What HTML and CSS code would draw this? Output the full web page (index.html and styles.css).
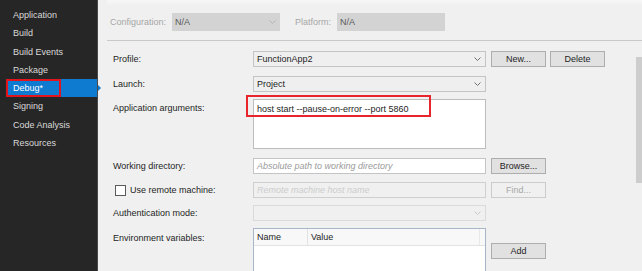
FILE: index.html
```html
<!DOCTYPE html>
<html>
<head>
<meta charset="utf-8">
<link rel="stylesheet" href="styles.css">
</head>
<body>
<div class="app">
  <nav class="sidebar">
    <div class="nav-item">Application</div>
    <div class="nav-item">Build</div>
    <div class="nav-item">Build Events</div>
    <div class="nav-item">Package</div>
    <div class="nav-item selected"><span class="mark">Debug*</span><span class="pointer"></span></div>
    <div class="nav-item">Signing</div>
    <div class="nav-item">Code Analysis</div>
    <div class="nav-item">Resources</div>
  </nav>
  <main class="main">
    <header class="topbar">
      <span class="top-label">Configuration:</span>
      <div class="top-combo"><span>N/A</span><svg class="chev" width="7" height="4" viewBox="0 0 7 4"><polyline points="0.5,0.5 3.5,3.5 6.5,0.5" fill="none" stroke="#b4b4b4" stroke-width="1"/></svg></div>
      <span class="top-label platform">Platform:</span>
      <div class="top-combo"><span>N/A</span></div>
    </header>
    <div class="content">
      <div class="form">
        <div class="row r-profile">
          <div class="label">Profile:</div>
          <div class="combo"><span>FunctionApp2</span><svg class="chev" width="7" height="4" viewBox="0 0 7 4"><polyline points="0.5,0.5 3.5,3.5 6.5,0.5" fill="none" stroke="#707070" stroke-width="1"/></svg></div>
          <div class="btn">New...</div>
          <div class="btn">Delete</div>
        </div>
        <div class="row r-launch">
          <div class="label">Launch:</div>
          <div class="combo"><span>Project</span><svg class="chev" width="7" height="4" viewBox="0 0 7 4"><polyline points="0.5,0.5 3.5,3.5 6.5,0.5" fill="none" stroke="#707070" stroke-width="1"/></svg></div>
        </div>
        <div class="row r-args">
          <div class="label label-top">Application arguments:</div>
          <div class="textarea">host start --pause-on-error --port 5860</div>
          <div class="annot"></div>
        </div>
        <div class="row r-wd">
          <div class="label">Working directory:</div>
          <div class="input"><span class="ph">Absolute path to working directory</span></div>
          <div class="btn">Browse...</div>
        </div>
        <div class="row r-remote">
          <div class="label"><span class="checkbox"></span>Use remote machine:</div>
          <div class="input disabled"><span class="ph light">Remote machine host name</span></div>
          <div class="btn disabled">Find...</div>
        </div>
        <div class="row r-auth">
          <div class="label">Authentication mode:</div>
          <div class="combo disabled"><span></span><svg class="chev" width="7" height="4" viewBox="0 0 7 4"><polyline points="0.5,0.5 3.5,3.5 6.5,0.5" fill="none" stroke="#c8c8c8" stroke-width="1"/></svg></div>
        </div>
        <div class="row r-env">
          <div class="label">Environment variables:</div>
          <div class="grid">
            <div class="grid-head">
              <div class="col-name">Name</div>
              <div class="col-value">Value</div>
              <div class="col-rest"></div>
            </div>
            <div class="grid-body"></div>
          </div>
          <div class="btn btn-add">Add</div>
        </div>
      </div>
      <div class="scrollbar">
        <div class="thumb"></div>
      </div>
    </div>
  </main>
</div>
</body>
</html>
```

FILE: styles.css
```css
* { box-sizing: border-box; }
html, body {
  margin: 0;
  padding: 0;
  width: 642px;
  height: 271px;
  overflow: hidden;
}
body {
  font-family: "Liberation Sans", Arial, sans-serif;
  font-size: 9px;
  color: #1e1e1e;
  background: #f0f0f0;
}
.app {
  display: flex;
  height: 271px;
}
.sidebar {
  width: 98px;
  flex: none;
  background: #262626;
  border-right: 1px solid #4a4a4a;
  padding-top: 6px;
}
.nav-item {
  height: 18.3px;
  line-height: 18.3px;
  padding-left: 13px;
  color: #dadada;
  white-space: nowrap;
}
.nav-item.selected {
  position: relative;
  background: #0e7ad0;
  margin-left: 6px;
  padding-left: 0;
  color: #ffffff;
}
.mark {
  display: inline-block;
  height: 18.3px;
  width: 55px;
  border: 2px solid #e2141e;
  padding-left: 5px;
  line-height: 14.3px;
  vertical-align: top;
}
.pointer {
  position: absolute;
  right: -4px;
  top: 6px;
  width: 0;
  height: 0;
  border-top: 3px solid transparent;
  border-bottom: 3px solid transparent;
  border-left: 3px solid #0e7ad0;
}
.main {
  flex: 1;
  min-width: 0;
  display: flex;
  flex-direction: column;
  background: #f0f0f0;
  overflow: hidden;
}
.topbar {
  flex: none;
  height: 41px;
  margin-left: 9px;
  padding: 13px 0 0 3px;
  border-bottom: 1px solid #c9c9c9;
  display: flex;
  align-items: flex-start;
  background: linear-gradient(#f7f7f7, #f0f0f0 6px);
}
.top-label {
  color: #a6a6a6;
  line-height: 18px;
  width: 62px;
}
.top-label.platform {
  width: 42px;
  margin-left: 15px;
}
.top-combo {
  width: 108px;
  height: 18px;
  background: #d3d3d3;
  color: #5a5a5a;
  display: flex;
  align-items: center;
  justify-content: space-between;
  padding: 0 4px 0 3px;
}
.content {
  flex: 1;
  min-height: 0;
  display: flex;
}
.form {
  flex: 1;
  padding: 10px 0 0 15px;
  display: flex;
  flex-direction: column;
}
.row {
  flex: none;
  display: flex;
  align-items: center;
  position: relative;
}
.r-launch { margin-top: 9px; }
.r-args { margin-top: 7px; align-items: flex-start; }
.r-wd { margin-top: 9px; }
.r-remote { margin-top: 8px; }
.r-auth { margin-top: 7px; }
.r-env { margin-top: 7px; align-items: flex-start; }
.label {
  width: 140px;
  flex: none;
  display: flex;
  align-items: center;
  white-space: nowrap;
}
.label-top { padding-top: 4px; }
.r-env .label { padding-top: 5px; }
.combo, .input, .textarea, .grid {
  width: 233px;
  flex: none;
}
.combo {
  height: 16px;
  border: 1px solid #c4c4c4;
  background: #efefef;
  display: flex;
  align-items: center;
  justify-content: space-between;
  padding: 0 4px 0 3px;
}
.combo.disabled {
  border-color: #dadada;
  background: #f0f0f0;
}
.input {
  height: 16px;
  border: 1px solid #c4c4c4;
  background: #ffffff;
  display: flex;
  align-items: center;
  padding-left: 3px;
}
.input.disabled {
  background: #f0f0f0;
  border-color: #cfcfcf;
}
.ph {
  font-style: italic;
  color: #9a9a9a;
}
.ph.light { color: #cccccc; }
.textarea {
  height: 50px;
  border: 1px solid #bdbdbd;
  background: #ffffff;
  padding: 4px 3px;
}
.annot {
  position: absolute;
  left: 133px;
  top: -4px;
  width: 185px;
  height: 22px;
  border: 2px solid #e8242c;
}
.btn {
  width: 55px;
  height: 16px;
  flex: none;
  margin-left: 5px;
  border: 1px solid #adadad;
  background: #e1e1e1;
  display: flex;
  align-items: center;
  justify-content: center;
}
.btn + .btn { margin-left: 4px; }
.btn.disabled {
  border-color: #cccccc;
  background: #f0f0f0;
  color: #a8a8a8;
}
.btn-add { margin-top: 15px; }
.checkbox {
  width: 11px;
  height: 11px;
  border: 1px solid #5a5a5a;
  background: #ffffff;
  margin: 0 4px 0 2px;
}
.grid {
  height: 50px;
  border: 1px solid #a9b6c8;
  border-bottom: none;
  background: #ffffff;
}
.grid-head {
  height: 17px;
  display: flex;
  background: #f8f8f8;
  border-bottom: 1px solid #e2e2e2;
}
.grid-head > div {
  display: flex;
  align-items: center;
  padding-left: 3px;
}
.col-name { width: 54px; border-right: 1px solid #e2e2e2; }
.col-value { width: 172px; border-right: 1px solid #e8e8e8; }
.col-rest { flex: 1; }
.scrollbar {
  width: 6px;
  flex: none;
  padding-top: 16px;
}
.thumb {
  height: 126px;
  background: #cdcdcd;
}
```
